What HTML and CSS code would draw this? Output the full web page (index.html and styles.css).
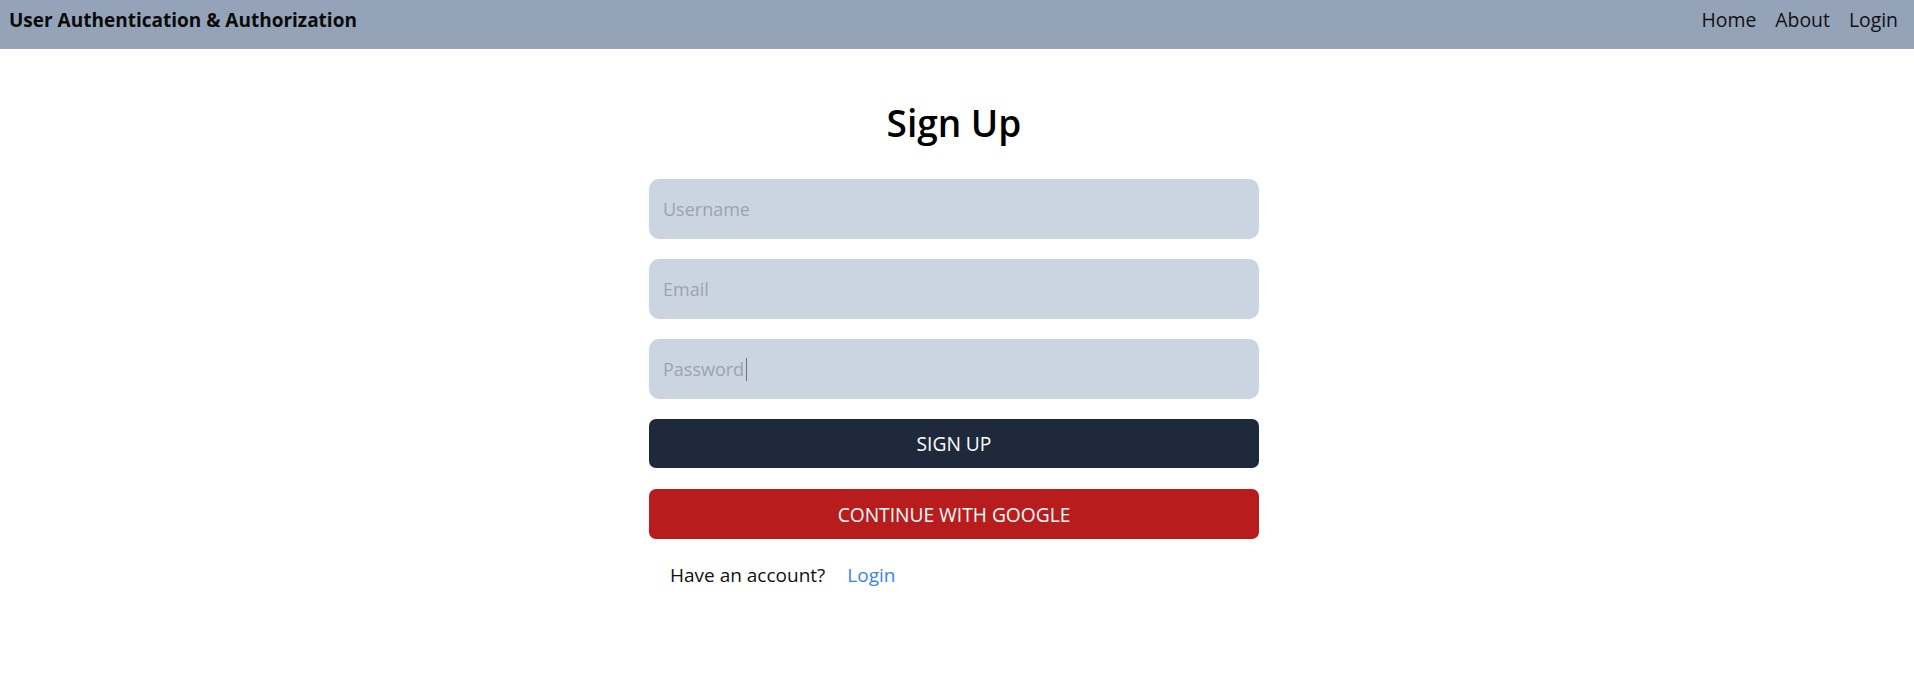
FILE: index.html
```html
<!DOCTYPE html>
<html lang="en">
<head>
<meta charset="utf-8">
<title>Sign Up</title>
<link rel="stylesheet" href="styles.css">
</head>
<body>
<header class="topbar">
  <div class="brand">User Authentication &amp; Authorization</div>
  <nav class="nav">
    <a class="nav-link" href="#">Home</a>
    <a class="nav-link" href="#">About</a>
    <a class="nav-link" href="#">Login</a>
  </nav>
</header>
<main class="page">
  <div class="card">
    <h1 class="title">Sign Up</h1>
    <form class="form">
      <input class="field" type="text" placeholder="Username">
      <input class="field" type="email" placeholder="Email">
      <div class="field-wrap">
        <input class="field" type="password" placeholder="Password">
        <span class="caret"></span>
      </div>
      <button class="btn btn-dark" type="button">Sign Up</button>
      <button class="btn btn-red" type="button">Continue with Google</button>
    </form>
    <div class="switch">
      <span>Have an account?</span>
      <a class="switch-link" href="#">Login</a>
    </div>
  </div>
</main>
</body>
</html>
```

FILE: styles.css
```css
* { box-sizing: border-box; }
body {
  margin: 0;
  font-family: "Open Sans", "Noto Sans", sans-serif;
  font-size: 19px;
  line-height: 28px;
  color: #111;
  background: #fff;
}
.topbar {
  height: 49px;
  background: #94a3b8;
  display: flex;
  justify-content: space-between;
  align-items: flex-start;
  padding: 6px 16px 0 9px;
}
.brand {
  font-weight: 700;
  font-size: 19px;
  color: #0a0a0a;
}
.nav {
  display: flex;
  gap: 19px;
  font-size: 19.4px;
}
.nav-link {
  color: #111;
  text-decoration: none;
}
.page {
  display: flex;
  justify-content: center;
  padding-right: 6px;
}
.card {
  width: 610px;
  display: flex;
  flex-direction: column;
}
.title {
  margin: 52px 0 0;
  font-size: 37px;
  font-weight: 600;
  line-height: 43px;
  text-align: center;
  color: #000;
}
.form {
  margin-top: 35px;
  display: flex;
  flex-direction: column;
  gap: 20px;
}
.field-wrap {
  position: relative;
  display: flex;
}
.field {
  width: 100%;
  height: 60px;
  border: none;
  border-radius: 10px;
  background: #cbd5e1;
  padding: 0 14px;
  font-family: inherit;
  font-size: 18px;
  color: #111;
  outline: none;
}
.field::placeholder { color: #9ca3af; }
.caret {
  position: absolute;
  left: 97px;
  top: 19px;
  width: 1px;
  height: 23px;
  background: #6b7280;
}
.btn {
  height: 49px;
  border: none;
  border-radius: 7px;
  color: #fff;
  font-family: inherit;
  font-size: 19.2px;
  text-transform: uppercase;
  cursor: pointer;
}
.btn-dark { background: #1e293b; }
.btn-red { background: #b91c1c; height: 50px; margin-top: 1px; }
.switch {
  margin-top: 22px;
  padding-left: 21px;
  display: flex;
  gap: 22px;
}
.switch-link {
  color: #3b82f6;
  text-decoration: none;
}
```
